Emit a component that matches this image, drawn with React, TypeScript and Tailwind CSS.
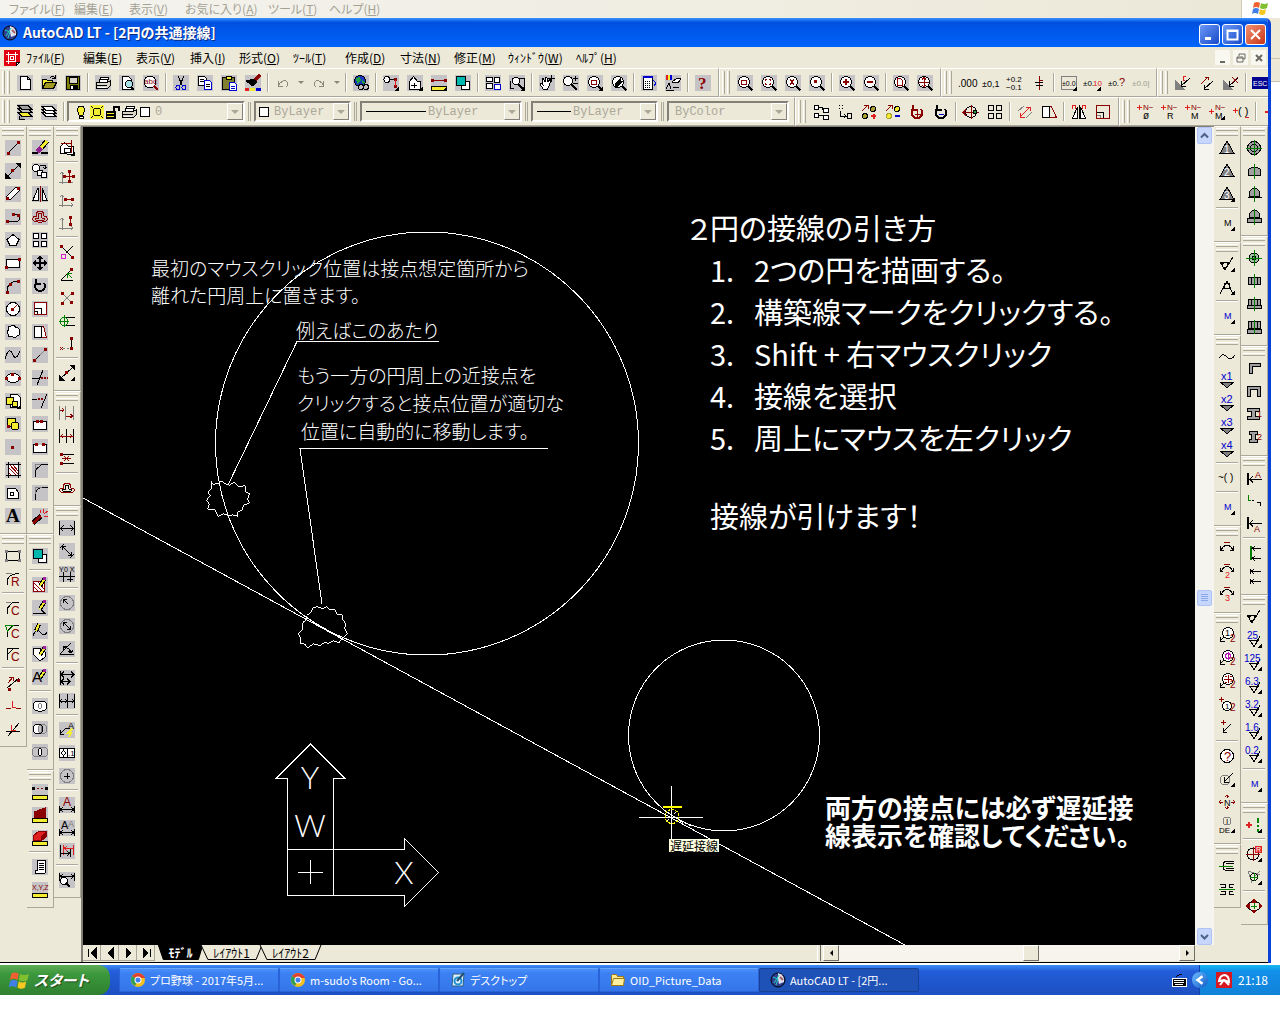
import type { ReactNode } from "react";
import clsx from "clsx";

const K = "#000000";
const R = "#8b0000";
const E = "#e02020";
const G = "#008000";
const B = "#0000d0";
const Y = "#f4ec30";
const W = "#ffffff";
const S = "#808080";
const T = "#00b8b0";
const N = "none";

// [path, stroke, fill, stroke width]
type Layer = [string, string?, string?, number?];
// [text, x, y, colour, size]
type Label = [string, number, number, string?, number?];
type IconDef = { p?: Layer[]; t?: Label[]; bg?: boolean; fly?: boolean };

const c = (x: number, y: number, r: number) =>
  `M${x - r} ${y}a${r} ${r} 0 1 0 ${2 * r} 0a${r} ${r} 0 1 0 ${-2 * r} 0`;
const dot = (x: number, y: number) => `M${x - 1} ${y - 1}h3v3h-3z`;
const dots = (...pts: [number, number][]): Layer => [pts.map(([x, y]) => dot(x, y)).join(""), N, R];

const lens = (...extra: Layer[]): Layer[] => [
  [c(7, 7, 5.5), K, W],
  ["M11 11L15.5 15.5", K, N, 2],
  ...extra,
];
const ruler: Layer = ["M.5 11.5h15v4h-15z", K, Y];
const page = "M3.5 1.5h6l3 3v10h-9z";
const pencil: Layer[] = [
  ["M13 1L8 9", K, N, 4],
  ["M13 1L8 9", Y, N, 2],
  ["M13 0L12 3", "#a020a0", N, 3],
];
const dimH = "M.5 1v14M15.5 1v14M1 8.5h14M4.5 5.5L1.5 8.5l3 3M11.5 5.5l3 3-3 3";
const rough: Layer = ["M4 8.5h8L8 14.5zM8 14.5L14 4", K];
const balloon: Layer[] = [
  [c(9, 6, 5.5), K, W],
  ["M5 10L1 14M1.5 10v4.5H6", K],
];

const icons: Record<string, IconDef> = {
  new: { bg: true, p: [["M3.5 1.5h7l3 3v10h-10zM10.5 1.5v3h3", K, W]] },
  open: { bg: true, p: [["M1.5 13.5v-9h4l1 1h5v2", K, Y], ["M1.5 13.5l3-6h11l-3 6z", K, "#a09820"], ["M9 3q3-3 5 0M14 0v3h-3", K]] },
  save: { bg: true, p: [["M1.5 1.5h13v13h-13z", K, "#808000"], ["M4 2h8v6H4z", K, "#d8d4c8"], ["M5 10h7v4H5z", K, K], ["M6 11h2v3H6z", N, W]] },
  print: { bg: true, p: [["M4 7l2-5h8l-2 5", K, W], ["M1.5 7.5h11l3-2v5l-3 3h-11z", K, "#d8d4c8"], ["M2 10.5h10M6 4.5h6", K], ["M3 12.5h8", W]] },
  preview: { bg: true, p: [[page, K, W], [c(10, 9, 3.5), K, "#a8e0e8"], ["M12 12l3 3", K, N, 2]] },
  spell: { bg: true, p: [[c(7, 7, 6), K, W], ["M11 11l4 4", R, N, 2]], t: [["abc", 1, 9, R, 8]] },
  cut: { bg: true, p: [["M5 1l4 9M11 1L7 10", K], [c(5, 12.5, 2), B], [c(11, 12.5, 2), B]] },
  copy: { bg: true, p: [["M1.5 1.5h6l2 2v7h-8z", K, W], ["M7.5 5.5h5l2 2v7h-7z", B, W], ["M3 4.5h4M3 6.5h4M9 9.5h4M9 11.5h4", K]] },
  paste: { bg: true, p: [["M1.5 2.5h12v12h-12z", K, "#808030"], ["M5 1h5v3H5z", K, Y], ["M8.5 7.5h5l2 2v6h-7z", B, W], ["M10 11.5h4M10 13.5h4", B]] },
  matchprop: { bg: true, p: [["M15 0L9 6", R, N, 4], ["M1 6l8-2 3 3-4 4z", K, K], ["M0 13h4v3H0z", N, E], ["M5 13h5v3H5z", N, Y], ["M11 13h5v3h-5z", N, B]] },
  undo: { p: [["M3.5 6v5.5H8M3 11Q8 3 12 7Q14 10 11 12", "#8c8a7c"]] },
  redo: { p: [["M12.5 6v5.5H8M13 11Q8 3 4 7Q2 10 5 12", "#8c8a7c"]] },
  globe: { bg: true, p: [[c(7, 6, 5.5), K, "#1838c0"], ["M3 3l4-1 1 3-4 4zM9 5l3 2-2 3z", N, "#20a040"], [c(8, 12, 2.5), K, "#c0c0c0"], [c(13, 12, 2.5), K, "#c0c0c0"]] },
  osnap: { bg: true, fly: true, p: [[c(4, 4.5, 3), K, W], ["M7 4.5h4", K], dots([12, 4], [12, 11]), ["M12.5 5v6", E]] },
  plan: { bg: true, fly: true, p: [["M2.5 14.5v-8l4-5 4 5h3v8z", K, W], ["M7.5 8v5M4 10.5h6", K]] },
  distance: { bg: true, fly: true, p: [["M1 5.5h14", R], dots([1, 5], [14, 5]), ruler] },
  draworder: { bg: true, p: [["M6.5 6.5h8v8h-8z", K, W], ["M1.5 1.5h9v9h-9z", K, T]] },
  viewports: { bg: true, p: [["M1.5 2.5h6v4h-6zM1.5 8.5h6v5h-6zM9.5 2.5h5v5h-5z", K, W], ["M9.5 9.5h6v5h-6z", B, W]] },
  namedviews: { bg: true, fly: true, p: [["M1.5 6v7h3M3 3.5h12v9h-2", K], [c(7, 6, 3.5), K, W], ["M9 9l5 5", K, N, 2]] },
  pan: { bg: true, p: [["M4 14L1 9l1-1 2 2L3 4l1-1 2 4 1-5 1 1 1 4 2-3 1 1-2 6-2 4z", K, W], ["M12.5 0v7M9 3.5h7", K]] },
  zoomrt: { bg: true, p: [[c(5, 6, 4.5), K, W], ["M8 9l6 6", K, N, 2], ["M10 3.5h5M12.5 1v5M10 8.5h5", K]] },
  zoomwin: { bg: true, p: lens(["M4.5 9.5v-4h5v4z", R]) },
  zoomflyout: { bg: true, fly: true, p: lens(["M4.5 9.5v-4h5v4z", R]) },
  zoomprev: { bg: true, p: lens(["M4 9l6-6-1 4 3-1-7 7z", K, K]) },
  properties: { bg: true, p: [["M2.5 1.5h9v13h-9z", K, W], ["M2 2h10", B, N, 2], ["M4 6.5h1M6 6.5h1M8 6.5h1M4 8.5h1M6 8.5h1M8 8.5h1M4 10.5h1M6 10.5h1M8 10.5h1M4 12.5h1M6 12.5h1M8 12.5h1", K], ["M12 5l3 3-2 3", B]] },
  designcenter: { bg: true, p: [["M1 0h2v5H1z", N, E], ["M3 0h2v5H3z", N, Y], ["M5 0h2v5H5z", N, B], ["M7 7l5-4 4 1-3 4z", K, W], ["M1 14l3-6 2 6M8 12.5h6M1 15.5h8", K]] },
  help: { bg: true, t: [["?", 3, 14, R, 17]] },
  zoomdyn: { bg: true, p: lens(["M4.5 6V4.5H6M9.5 6V4.5H8M4.500 8v1.5H6M9.500 8v1.500H8", R]) },
  zoomscale: { bg: true, p: lens(["M5 4l4 6M9 4l-4 6", R]) },
  zoomcenter: { bg: true, p: lens([dot(6, 6), N, R]) },
  zoomin: { bg: true, p: lens(["M4 7h6M7 4v6", R, N, 2]) },
  zoomout: { bg: true, p: lens(["M4 7h6", R, N, 2]) },
  zoomall: { bg: true, p: lens(["M4.5 3.5h3l2 2v5h-5z", R]) },
  zoomext: { bg: true, p: lens(["M2 7.5h10M7.5 2v10M5 4.500l2-2 2 2M5 10l2 2 2-2", R]) },
  tol000: { t: [[".000", -1, 12, K, 10]] },
  tol01: { t: [["±0,1", -1, 12, K, 9]] },
  tol02: { t: [["+0.2", -1, 7, K, 8], ["−0.1", -1, 15, K, 8]] },
  tolfit: { p: [["M8.5 1v14M8 5.5h4", R], ["M4 7.5h8M5 10.5h7", K]] },
  tolbox: { fly: true, p: [["M.5 1.5h15v13h-15z", S]], t: [["±0.0", 1, 11, K, 7]] },
  tol010: { fly: true, t: [["±0.", -2, 11, K, 8], ["10", 8, 11, E, 8]] },
  tolask: { t: [["±0.", -1, 11, K, 8], ["?", 10, 11, R, 11]] },
  tol001: { t: [["±0.0|", -1, 11, "#a0a090", 8]] },
  chamA: { p: [["M0 15V5l10 10z", N, S], ["M15 3L6 11M6.5 6v5.500H11", K], ["M11 1.5H8v4h2", E]] },
  chamB: { p: [["M14 6L5 14M5.5 10v4.500H10", K], ["M2 9L9 2M6 2.500h3.500V5", R]] },
  chamC: { p: [["M0 15V5l10 10z", N, S], ["M15 3L6 11M6.5 6v5.500H11", K], ["M9 2l6 6M15 2L9 8", R]] },
  esc: { p: [["M-1 2h17v12H-1z", N, "#000090"]], t: [["ESC", 0, 11, W, 7]] },
  layerprev: { bg: true, p: [["M1 4.5h10l4 4H5z", K, "#c0c0c0"], ["M1 8.5h10l4 4H5z", K, Y], ["M1 1.5h10l4 4H5zM2 12v3h6", K, "#a0a0a0"]] },
  layers: { bg: true, p: [["M1 8.5h10l4 4H5z", K, W], ["M1 5.5h10l4 4H5z", K, W], ["M1 2.5h10l4 4H5z", K, W]] },
  bulb: { p: [["M8 2Q3 3 5 8l1 3h4l1-3Q13 3 8 2z", K, Y], ["M6 12h4v2H6z", K, W]] },
  sun: { p: [["M1 1h14v14H1z", N, "#f8f440"], [c(8, 8, 4), K, Y], ["M2 2l2 2M14 2l-2 2M2 14l2-2M14 14l-2-2", K]] },
  lock: { p: [["M1 7h9v7H1z", K, K], ["M9 7V3h5v4", K, N, 2], ["M2 9.5h7M2 12.5h7", Y]] },
  swatch: { p: [["M3.5 3.5h9v9h-9z", K, W]] },
  cpA: { p: [["M1.5 1.5h4v4h-4zM1.5 9.5h4v4h-4zM10.5 4.5h5v4h-5zM10.5 11.5h5v4h-5z", K, W], ["M6 3.500h3.500V6M6 11.500h4", K]] },
  cpB: { p: [["M1.5 1.500h1M4.500 1.500h1M1.500 4.500h1M4.500 4.500h1", K], ["M10.5 9.5h4v5h-4zM3.500 7v5.500h6M7 10l2 2-2 2", K]] },
  cpC: { p: [["M1 7L7 1M3 1.5h4.500V5", R], [c(12, 5, 2.5), K, "#a8a030"], [c(4, 12, 2.5), K, "#a8a030"], ["M10 12h5M12.500 9.500v5", E, N, 2]] },
  cpD: { p: [["M1 7L7 1M3 1.5h4.500V5", R], [c(12, 5, 2.5), K, Y], [c(4, 12, 2.5), "#a8a030", Y], ["M10 12h5", B, N, 2]] },
  rotR: { p: [["M4 5a5.5 5.5 0 1 0 8 0M4 1v5h5", R, N, 2], ["M8.5 7v6M6 10.5h6", R]] },
  rotK: { p: [["M4 5a5.5 5.5 0 1 0 8 0M4 1v5h5", K, N, 2], ["M6 10.5h5", B]] },
  center: { p: [[c(8, 8, 5.5), K], ["M0 8.5h16M8.5 1v14M3 5.500l-3 3 3 3", R], [c(12, 8, 2), K, "#20a040"]] },
  array: { bg: true, p: [["M1.5 1.5h5v5h-5zM9.5 1.5h5v5h-5zM1.5 9.5h5v5h-5zM9.5 9.5h5v5h-5z", K, W]] },
  array2: { p: [["M1.5 1.5h5v5h-5zM9.5 1.5h5v5h-5zM1.5 9.5h5v5h-5zM9.5 9.5h5v5h-5z", K]] },
  stretchR: { p: [["M1 7l6-5M15 8l-6 6", S], ["M3 13L13 3M9 3.5h4.500V7M3.500 9v4.500H8", E]] },
  taper: { p: [["M1.5 2.5h7v11h-7z", K, W], ["M8.5 2.5h2l5 11h-7", R]] },
  mirrorR: { p: [["M6.5 3v11h-5zM9.5 3v11h5z", K, W], ["M8 1v14", K], ["M1.5 5V1.500h3v3M11.500 5V1.500h3v3", E]] },
  scaleR: { p: [["M1.5 1.5h13v13h-13z", R], ["M2 8.5h6.500V14", K], ["M2 11.5h3.500V14", S]] },
  n0: { p: [["M0 3.5h5M2.5 1v5", E]], t: [["N−", 6, 6, R, 8], ["ø", 6, 15, K, 10]] },
  nR: { p: [["M0 3.5h5M2.5 1v5", E]], t: [["N−", 6, 6, R, 8], ["R", 6, 15, K, 9]] },
  nM: { p: [["M0 3.5h5M2.5 1v5", E]], t: [["N−", 6, 6, R, 8], ["M", 6, 15, K, 9]] },
  nMC: { fly: true, p: [["M0 7.5h5M2.5 5v5", E]], t: [["N−", 6, 6, R, 8], ["M", 6, 15, K, 9]] },
  nPar: { p: [["M0 6.5h5M2.5 4v5M12 13.500h4", E]], t: [["( )", 5, 11, K, 11]] },
  redbar: { p: [["M2 8h12", E, N, 2]] },

  line: { bg: true, p: [["M3 13L13 3", K], dots([3, 13], [13, 2])] },
  xline: { bg: true, p: [["M1 15L15 1", K], ["M0 10v6h6zM16 6V0h-6z", N, K], [dot(7, 7), N, R]] },
  mline: { bg: true, p: [["M1 11L11 1l4 3L5 14z", K, W], dots([2, 12], [13, 2])] },
  pline: { bg: true, p: [["M2 12.5h10Q16 11 14 6L8 5", K], dots([2, 12], [8, 5], [13, 6])] },
  polygon: { bg: true, p: [["M8 2.5l6 5-3 6H5l-3-6z", K, W]] },
  rect: { bg: true, p: [["M1.5 4.5h13v8h-13z", K, W], dots([1, 12], [14, 4])] },
  arc: { bg: true, p: [["M2 14Q2 3 14 3", K], dots([2, 14], [5, 6], [13, 3])] },
  circle: { bg: true, p: [[c(8, 8, 6.5), K, W], ["M8 8l4-4", R], [dot(7, 8), N, R]] },
  cloud: { bg: true, p: [["M4 6Q1 7 3 10Q3 14 7 12Q10 15 12 12Q16 11 14 8Q15 3 11 4Q9 0 6 2Q2 2 4 6z", K, W]] },
  spline: { bg: true, p: [["M0 12Q4-2 8 8Q11 14 15 4", K]] },
  ellipse: { bg: true, p: [["M1 8a7 4.5 0 1 0 14 0a7 4.5 0 1 0 -14 0", K, W], dots([1, 8], [7, 4], [14, 8])] },
  insert: { bg: true, fly: true, p: [["M5.5 1.5h7l3 3v10h-10z", K, W], ["M1.5 4.5h7v7h-7z", K, Y], [c(10, 11, 3), K, Y]] },
  block: { bg: true, p: [["M2.5 2.5h8v8h-8z", K, Y], [c(10, 10, 4), K, Y], dots([3, 10])] },
  point: { bg: true, p: [[dot(7, 8), N, R]] },
  hatch: { bg: true, p: [["M3.5 2.5h10v11h-10z", K, W], ["M4 6l7 7M4 2l9 10M8 3l5 6M3 10l4 4", R], ["M1 2.5h15M1 13.5h15M3.5 0v16M13.5 0v16", K]] },
  region: { bg: true, p: [["M2.5 3.5h8l3 4v6h-11z", K, W], [c(7, 9, 2), K]] },
  mtext: { bg: true, t: [["A", 1, 14, K, 19]] },
  erase: { bg: true, p: [["M0 13h6M9 13h7", K, N, 2], ["M15 1L9 8", K, N, 5], ["M15 1L9 8", Y, N, 3], ["M9 8l-4 4", "#902090", N, 5]] },
  copyobj: { bg: true, p: [[c(4, 5, 3.5), K, W], ["M8 2h5v4M11 4l2 2 2-2", K], [c(8, 10, 3), K, W], [c(12, 12, 3), K, W]] },
  mirror: { bg: true, p: [["M6 2v12H1zM10 2v12h5z", K, W], ["M8.5 0v16", R]] },
  offset: { bg: true, p: [["M1 11Q0 7 4 7Q4 2 8 2Q12 2 12 7Q16 7 15 11Q14 13 10 13H6Q2 13 1 11z", R], ["M4 11Q3 9 6 9Q6 4 8 4Q10 4 10 9Q13 9 12 11z", R]] },
  move: { bg: true, p: [["M8 1v14M1 8h14", K, N, 2], ["M8 0l3 4H5zM8 16l3-4H5zM0 8l4-3v6zM16 8l-4-3v6z", N, K]] },
  rotate: { bg: true, p: [["M4 5a5 5 0 1 0 8 0M4 1v5h5", K, N, 2]] },
  scale: { bg: true, p: [["M2.5 1.5h12v12h-12z", R, W], ["M3 7.500h6.500V13", K], ["M2 10.5h3.500V13", K]] },
  stretch: { bg: true, p: [["M2.5 2.5h7v11h-7z", K, W], ["M9.5 2.5h2l3 11h-5", R, W]] },
  lengthen: { bg: true, p: [["M2 14l6-6", K], ["M8 8l6-6", S], dots([2, 13], [13, 2])] },
  trim: { bg: true, p: [["M11 0L5 15M0 8.5h7", K], ["M9 8h2M12 8h2M15 8h1", R, N, 2]] },
  extend: { bg: true, p: [["M15 1L9 15M0 6h5", K], ["M6 6h2M9 6h2", R, N, 2]] },
  break1: { bg: true, p: [["M1.5 5.5h13v8h-13z", K, W], dots([5, 5], [9, 5])] },
  break2: { bg: true, p: [["M4 5.5H1.5v8h13v-8H12", K, W], dots([4, 5], [11, 5])] },
  chamfer: { bg: true, p: [["M3.5 15V8l6-5.5H16", K], ["M3.5 8V2.5H9", S]] },
  fillet: { bg: true, p: [["M3.5 15V9Q4 3 11 2.5h5", K], ["M3.5 9V2.5H10", S]] },
  explode: { bg: true, p: [["M1 15l8-7", K, N, 5], ["M1 15l8-7", R, N, 3], ["M11 5l1-4M12 6l4-3M12 8l4 1M9 5L8 2", E]] },
  refedit: { p: [["M1.5 3.5h13v9h-13z", K], [dot(1, 3) + dot(14, 3) + dot(1, 12) + dot(14, 12), N, S]] },
  filR: { p: [["M2.5 14V9Q3 3 14 2.5", K], ["M1 2.5h6", S]], t: [["R", 6, 15, R, 12]] },
  filC: { p: [["M2.5 14V8l5-5.5H14", K], ["M1 2.5h5", S]], t: [["C", 6, 15, R, 12]] },
  filCg: { p: [["M2.5 14V8l5-5.5H14", K], ["M.5 2.5h8l-6 6z", G]], t: [["C", 6, 15, R, 12]] },
  filCk: { p: [["M2.5 14V2.5H14", K], ["M3 8l5-5", K]], t: [["C", 6, 15, R, 12]] },
  redA: { p: [["M2 13L14 3", K], ["M3 8l5-6M4 2.5h4.5V6", R], dots([13, 5], [4, 14])] },
  redB: { p: [["M1 10.5h5M11 10.5h5", R], ["M7.5 3v6.500H11", E]] },
  redC: { p: [["M1 10.5h14", K], ["M3 15L14 2", K], ["M6.5 4v5.500H11", E]] },
  hatchedit: { bg: true, p: [["M1.5 4.5h11v10h-11z", R, W], ["M2 10l4 4M2 6l8 8M6 5l6 7", R], ...pencil] },
  pedit: { bg: true, p: [["M1 13.5h12l-4-4", K], ...pencil] },
  splinedit: { bg: true, p: [["M1 13Q4 4 8 9Q12 15 15 9", K], ["M7 1L4 8", K, N, 4], ["M7 1L4 8", Y, N, 2]] },
  attedit: { bg: true, p: [["M1 3l6-1 6 4v5l-5 4-6-6z", K, W], ...pencil] },
  textedit: { bg: true, p: pencil, t: [["A", 0, 13, K, 15]] },
  union: { bg: true, p: [["M6 3a5 5 0 1 0 0 10h4a5 5 0 1 0 0-10z", K, W], ["M8 5Q5 8 8 11Q11 8 8 5z", S]] },
  subtract: { bg: true, p: [[c(10, 8, 5), S], [c(6, 8, 5), K, W], ["M8 4Q4 8 8 12Q12 8 8 4z", S, "#c6c3c6"]] },
  intersect: { bg: true, p: [[c(5, 8, 5), S], [c(11, 8, 5), S], ["M8 4Q4 8 8 12Q12 8 8 4z", K, W]] },
  inqdist: { bg: true, p: [["M1 4.5h2M5 4.500h2M9 4.500h2M13 4.500h2", R], [dot(1, 4) + dot(14, 4), N, K], ruler] },
  inqarea: { bg: true, p: [["M2 10V5l11-4v9z", R, R], ruler] },
  inqmass: { bg: true, p: [["M1 10V6l6-5h7v6l-5 4z", R, E], ["M9 11V6l5-4v5z", N, R], ruler] },
  list: { bg: true, p: [["M5.5 1.5h8v11q0 2-2 2h-8v-3h2z", K, W], ["M7 4.5h5M7 6.5h5M7 8.5h5M7 10.5h5", K]] },
  locate: { bg: true, p: [ruler], t: [["X,Y,Z", 0, 8, R, 7]] },

  house: { fly: true, p: [["M1.5 13.5v-7l4-4 4 4h5v8z", K, W], ["M5 8.5h6v4H5z", K], ["M2 3.5h10.500V13", R], ["M12 0v5", R]] },
  coordA: { p: [["M3.5 15V3M1 5l2-2 2 2M0 13.5h14", S], ["M5 7.5h10M10.5 2v10", R], dots([5, 7], [14, 7], [10, 2], [10, 12])] },
  coordB: { p: [["M3.5 15V3M1 5l2-2 2 2M0 13.5h14M12 11l2 2-2 2", S], ["M5 7.5h9", R], dots([6, 7], [13, 7])] },
  coordC: { p: [["M3.5 15V3M1 5l2-2 2 2M0 13.5h14M12 11l2 2-2 2", S], ["M11.5 2v8", R], dots([11, 2], [11, 9])] },
  snapA: { p: [["M2 2l12 12M14 2L7 9", K], dots([2, 2], [13, 13]), ["M2.5 10.5h4v4h-4z", "#d020d0"]] },
  snapB: { p: [["M2 13L13 2M2 13.5h12", K], dots([12, 2]), ["M8.5 11V6.500H13M8 6l5 5", G]] },
  snapC: { p: [["M3 13L13 3M3 3l10 10", S], dots([3, 3], [13, 3], [3, 13], [12, 12])] },
  snapD: { p: [[c(5, 8.5, 4), G], ["M0 8.5h10M5.5 2v12", G], ["M7 4.5h9M7 12.5h9", K]] },
  snapE: { p: [["M12.5 3v9", K], ["M4 12.5h2M8 12.500h2", S], dots([12, 2], [12, 12]), ["M1 11l3 3M4 11l-3 3", R]] },
  snapF: { fly: true, p: [["M1 14L14 2", K], ["M0 10v6h6zM16 6V0h-6z", N, K], [dot(7, 7), N, R]] },
  spA: { p: [["M.5 1v14M6.5 1v14M14.5 1v14", S], ["M1 5.5h4M7 11.500h7M3 3l2 2-2 2M11 9l3 2-3 2", R]] },
  spB: { p: [["M.5 1v14M7.5 1v14M14.5 1v14", K], ["M1 8.5h14M4 6L2 8l2 2M11 6l2 2-2 2", R]] },
  spC: { p: [["M1 3.5h14M1 12.5h14", K], ["M5 5l5 5M10 5l-5 5M3 7.5h9", R], dots([2, 3], [2, 12])] },
  offR: { p: [["M1 11Q0 8 4 8Q4 3 8 3Q12 3 12 8Q16 8 15 11Q14 13 8 13Q2 13 1 11z", R], ["M4 11Q3 9 6 9Q6 5 8 5Q10 5 10 9Q13 9 12 11z", K]] },
  dimlin: { bg: true, p: [[dimH, K]] },
  dimali: { bg: true, p: [["M1 5l4-4M11 15l4-4M3 3l10 10M3.5 7V3.5H7M12.5 9v3.500H9", K]] },
  dimord: { bg: true, p: [["M4.5 6v10M11.5 6v10M0 10.5h16M8 13.5h6", K]], t: [["Y", 0, 6, K, 7], ["0 X", 5, 6, K, 7]] },
  dimrad: { bg: true, p: [[c(8, 8, 6.5), S], ["M9 9L4 4M4.5 8V4.5H8", K]] },
  dimdia: { bg: true, p: [[c(8, 8, 6.5), S], ["M4 4l8 8M4.5 8V4.5H8M11.5 8v3.500H8", K]] },
  dimang: { bg: true, p: [["M1 13.5h14M1 13L12 2M5 6q6 1 7 6M4.5 9V5.500H8M9 10l3 2 2-3", K]] },
  dimbase: { bg: true, p: [["M1.5 1v14M2 4.500h13M2 11.500h8M12 1.500l3 3-3 3M8 8.500l3 3-3 3M5 1.500l-3 3 3 3M5 8.500l-3 3 3 3", K]] },
  dimcont: { bg: true, p: [["M.5 1v14M8.5 1v14M15.5 1v14M1 8.5h14M3 6L1 8l2 2M6 6l2 2-2 2M13 6l2 2-2 2", K]] },
  leader: { bg: true, p: [["M1 12l6-6h4M1.5 8v4.500H5", K], ["M13 7l-4 4h3l-2 4", Y, N, 2]], t: [["A", 9, 7, K, 9]] },
  toler: { bg: true, p: [["M.5 3.5h15v9h-15zM8.5 4v8", K, W], ["M4.5 5l2 3-2 3-2-3z", K]], t: [[".1", 9, 11, K, 8]] },
  centmark: { bg: true, p: [[c(8, 8, 6.5), S], ["M5 8.5h6M8.5 5v6", K]] },
  dimeditR: { bg: true, p: [["M.5 9v7M15.5 9v7M1 12.5h14M4 10l-3 2.5 3 2.5M12 10l3 2.5-3 2.5", K]], t: [["A", 4, 9, R, 12]] },
  dimeditK: { bg: true, p: [["M.5 9v7M15.5 9v7M1 12.5h14M4 10l-3 2.5 3 2.5M12 10l3 2.5-3 2.5", K]], t: [["A", 2, 9, K, 11], ["A", 9, 7, S, 9]] },
  dimupd: { bg: true, p: [["M1.5 2v12M11.500 5v9", K], ["M4.5 2v10M14.5 2v10M5 5.5h9M8 3L5 5.5l3 2", E], ["M2 10.5h9M8 8l3 2.500-3 2", K]] },
  dimstyle: { bg: true, p: [["M.5 1v8M15.5 1v8M1 4.5h14M12 2l3 2.500-3 2M4 2L1 4.500l3 2", K], [c(5, 9, 3.5), K, W], ["M7 11l4 4", K, N, 2]] },

  tri1: { p: [["M8 1L15 13.5H1z", K, S]], t: [["1", 5, 13, W, 10]] },
  tri2: { p: [["M8 1L15 13.5H1z", K, S]], t: [["2", 5, 13, W, 10]] },
  tri3: { fly: true, p: [["M8 1L15 13.5H1z", K, S]], t: [["3", 5, 13, W, 10]] },
  mk: { fly: true, t: [["M", 5, 11, K, 9]] },
  mb: { fly: true, t: [["M", 5, 11, B, 9]] },
  rghA: { fly: true, p: [["M1 6l5 8L14 1M2 6.5h8", K], [c(6, 9, 2.5), K]] },
  rghB: { fly: true, p: [["M1 15L8 2l6 13", K], [c(8, 7, 3), K]] },
  wave: { p: [["M0 9Q4 3 8 8Q12 12 16 6", K]] },
  x1: { p: [["M2 10.5h12L8 16z", K, S]], t: [["x1", 2, 8, B, 11]] },
  x2: { p: [["M2 10.5h12L8 16z", K, S]], t: [["x2", 2, 8, B, 11]] },
  x3: { p: [["M2 10.5h12L8 16z", K, S]], t: [["x3", 2, 8, B, 11]] },
  x4: { p: [["M2 10.5h12L8 16z", K, S]], t: [["x4", 2, 8, B, 11]] },
  wpar: { t: [["~( )", -1, 11, K, 10]] },
  arcdim: { p: [["M2 10Q8 0 14 10M1.5 6v4.500H5M14.500 6v4.500H11", K], ["M5 3Q8 1 11 3", R]] },
  arcdim2: { p: [["M2 8Q8-1 14 8M1.5 5v3.500H4M14.500 5v3.500H12", K], ["M5 2Q8 0 11 2", R]], t: [["2", 6, 15, E, 9]] },
  arcdim3: { p: [["M2 8Q8-1 14 8M1.5 5v3.500H4M14.500 5v3.500H12", K], ["M5 2Q8 0 11 2", R]], t: [["3", 6, 15, E, 9]] },
  balA: { p: balloon, t: [["1", 6, 9, K, 9], ["2", 11, 15, R, 10]] },
  balB: { p: [...balloon, ["M9.5 2v8", "#b020b0"], [c(9, 6, 2.5), "#b020b0"]], t: [["2", 11, 15, R, 10]] },
  balC: { p: [...balloon, ["M5 6.500h8M9.500 2v8M6 3.500h2M11 3.500h2M6 9.500h2", R]], t: [["2", 11, 15, R, 10]] },
  balD: { p: [[c(8, 10, 4.5), K, W], ["M0 3.5h5M2.5 1v5", R]], t: [["1", 6, 13, K, 8], ["2", 11, 15, R, 10]] },
  balE: { p: [["M2 3.5h5M4.5 1v5", R], ["M12 5l-8 8M4.500 9v4.500H8", K]] },
  ask: { p: [[c(8, 8, 6.5), K, W]], t: [["?", 5, 13, R, 13]] },
  circarrow: { fly: true, p: [[c(6, 9, 5), S], ["M14 2L5 11M5.500 6v5.500H10", K]] },
  moveN: { p: [["M8.5 1v3M8.5 12v3M0 8.5h4M12 8.5h4M6 3l2-2 2 2M6 13l2 2 2-2M2 6L0 8l2 2M14 6l2 2-2 2", R]], t: [["N", 5, 12, K, 9]] },
  de: { fly: true, p: [[c(8, 4, 4), S]], t: [["I", 7, 7, K, 8], ["DE", 0, 16, K, 8]] },
  boltA: { p: [["M15 3.5H7Q4 4 4 8Q4 12 7 12.5h8M7 5.500h8M7 10.500h8", K], ["M0 8.5h14", G]] },
  boltB: { p: [["M1 3.500h5v3H2M15 3.500h-5v3h4M1 13.500h5v-3H2M15 13.500h-5v-3h4", K], ["M0 8.5h16", G]] },

  screwTop: { p: [[c(8, 8, 6.5), K, "#a0a0a0"], [c(8, 8, 3.5), K], ["M0 8.5h16M8.5 0v16", G]] },
  nutA: { p: [["M2.5 12.5v-6l3-2h6l3 2v6z", K, "#a0a0a0"], ["M8.5 1v15", G]] },
  nutB: { p: [["M3.5 10.5v-5l3-3h4l3 3v5zM1.5 11.5h14", K, "#a0a0a0"], ["M8.5 0v16", G]] },
  nutC: { p: [["M3.5 8.5v-4l3-3h4l3 3v4zM1.5 9.5h14v4h-14z", K, "#a0a0a0"], ["M8.5 0v16", G]] },
  hexTop: { p: [[c(8, 8, 5), K, "#a0c0a0"], [c(8, 8, 2), K], ["M0 8.5h16M8.5 0v16", G]] },
  hexA: { p: [["M2.5 4.5h12v7h-12zM5.5 5v6M11.5 5v6", K, "#a0a0a0"], ["M8.5 1v14", G]] },
  hexB: { p: [["M2.5 3.5h12v6h-12zM5.5 3v6M11.5 3v6M1.5 12.500h14v-3h-14z", K, "#a0a0a0"], ["M8.5 1v14", G]] },
  hexC: { p: [["M2.5 2.5h12v7h-12zM5.5 3v6M11.5 3v6M1.5 10.5h14v4h-14z", K, "#a0a0a0"], ["M8.5 1v14", G]] },
  angle: { p: [["M3.5 13.5v-10h11v3h-8v7z", K, "#a0a0a0"]] },
  channel: { p: [["M1.5 13.5v-10h13v10h-3v-7h-7v7z", K, "#a0a0a0"]] },
  beam1: { p: [["M1.5 2.5h12v3h-4v5h4v3h-12v-3h4v-5h-4z", K, "#a0a0a0"]], t: [["1", 11, 11, R, 9]] },
  beam2: { p: [["M3.5 2.5h8v3h-2v5h2v3h-8v-3h2v-5h-2z", K, "#a0a0a0"]], t: [["2", 11, 11, R, 9]] },
  alA: { p: [["M2 3v12", K, N, 2], ["M3 9.5h13M7 6L4 9.500l3 3", K]], t: [["A", 9, 8, R, 9]] },
  alB: { p: [["M2.5 2v5M2 7.500h3", G], ["M6 7.500h2M14.5 9v4M11 9.500h3", K]] },
  alC: { p: [["M2 1v12", K, N, 2], ["M3 7.5h13M7 4L4 7.500l3 3", K]], t: [["A", 8, 16, R, 9]] },
  fork: { p: [["M5 1v14", G, N, 2], ["M6 3.5h9M6 13.5h9M9 1L6 3.500l3 2M9 11l-3 2.500 3 2", K]] },
  forkb: { p: [["M5 3.5h10M5 13.5h10M8 1L5 3.500l3 2M8 11l-3 2.500 3 2M4.5 1v5M4.5 11v5", K]] },
  r0: { p: [["M1 6l5 8L14 1M2 6.5h8", K], [c(6, 9, 2.5), K]] },
  r25: { fly: true, p: [rough], t: [["25", 1, 7, B, 10]] },
  r125: { fly: true, p: [rough], t: [["125", -2, 7, B, 10]] },
  r63: { fly: true, p: [rough], t: [["6.3", -1, 7, B, 10]] },
  r32: { fly: true, p: [rough], t: [["3.2", -1, 7, B, 10]] },
  r16: { fly: true, p: [rough], t: [["1.6", -1, 7, B, 10]] },
  r02: { fly: true, p: [rough], t: [["0.2", -1, 7, B, 10]] },
  plusbar: { fly: true, p: [["M0 8h6M3 5v6", E, N, 2], ["M12 1v5M12 8v2M12 12v3", G, N, 2]] },
  cenR: { fly: true, p: [[c(7, 8, 6), K], ["M0 8.5h14M7.5 1v14", R], ["M9 0h7v7H9z", N, E]], t: [["R", 10, 6, W, 7]] },
  cenG: { fly: true, p: [["M2 2l4 12M2 2l12 4M14 2L8 8", S], [c(8, 8, 3.5), K], ["M4 8.5h8M8.500 4v8", G]] },
  ellR: { p: [["M1 8a7 4.5 0 1 0 14 0a7 4.5 0 1 0 -14 0", K], ["M5 8.500h6M8.500 5v6", G], ["M8 1l2 3H6zM8 15l2-3H6zM0 8l3-2v4zM16 8l-3-2v4z", R, R]] },

  acadapp: { p: [[c(8, 8, 7), K, "#304090"], ["M8 1Q15 3 14 10L9 12 8 7z", N, "#e0e0f0"], ["M3 5l5 2-2 6M4 11l5-8", "#20d0c0"], ["M10 5l3 3", "#a06060", N, 2]] },
  acaddoc: { p: [["M0 0h16v12l-4 4H0z", N, "#e00010"], ["M2 4.5h12M2 11.5h10M4.500 2v12M11.500 2v10M6.500 6.500h3v3h-3z", W], ["M12 16v-4h4z", K, W]] },
  winlogo: { p: [["M1 3Q4 1 7 3L6 8Q3 6 0 8z", N, "#f06030"], ["M8 3Q11 5 15 3l-1 5Q10 10 7 8z", N, "#80c030"], ["M0 9q3-2 6 0l-1 5q-3-2-6 0z", N, "#4080e8"], ["M7 9q3 2 6 0l-1 5q-3 2-6 0z", N, "#f8c820"]] },
  chrome: { p: [[c(8, 8, 7), N, "#f4c020"], ["M8 8L2 4Q8-2 14 4l1 2H8z", N, "#e04030"], ["M8 8l-3 6Q-1 10 2 4z", N, "#30a050"], [c(8, 8, 3.5), N, W], [c(8, 8, 2.5), N, "#4080f0"]] },
  desktop: { p: [["M3 2h11l-1 12H2z", "#306080", "#e0f0ff"], [c(8, 9, 3.5), "#2090d0", N, 2], ["M7 9l7-8", "#205070", N, 2]] },
  folder: { p: [["M1.5 13.5v-10l1-1h4l1 2h6v9z", "#a07810", "#ffe890"], ["M1.5 13.5l2-7h11l-1 7z", "#a07810", "#fff0a0"]] },
  keyboard: { p: [["M1 6h14v8H1z", W, K], ["M3 8.5h10M3 10.5h10M4 12.5h8", W], ["M5 5q2-3 6-2", K]] },
  avira: { p: [["M0 0h16v16H0z", N, "#d81820"], ["M3 9Q4 3 9 3Q13 4 13 10L8 8zM8 8l-4 5M8 8l5 5", W, N, 2]] },
};

function Icon({ name, className, smooth }: { name: string; className?: string; smooth?: boolean }) {
  const icon = icons[name];
  return (
    <svg
      viewBox="0 0 16 16"
      shapeRendering={smooth ? "auto" : "crispEdges"}
      className={clsx("shrink-0 overflow-visible", className ?? "size-4")}
      aria-hidden="true"
    >
      {icon.bg && <rect width="16" height="16" fill="#c6c3c6" />}
      {icon.p?.map(([d, stroke = K, fill = "none", width = 1], i) => (
        <path key={i} d={d} stroke={stroke} fill={fill} strokeWidth={width} />
      ))}
      {icon.t?.map(([text, x, y, fill = K, size = 9], i) => (
        <text key={i} x={x} y={y} fill={fill} fontSize={size} className={name === "mtext" || name === "help" ? "font-['Liberation_Serif',serif] font-bold" : "font-['Liberation_Sans',sans-serif]"}>
          {text}
        </text>
      ))}
      {icon.fly && <path d="M16 11v5h-5z" fill="#000" />}
    </svg>
  );
}

// "|" is a separator, "v" a small drop-down arrow
function HBar({ items, children }: { items: string[]; children?: ReactNode }) {
  return (
    <div role="toolbar" className="flex h-[29px] shrink-0 items-stretch border-t border-r border-b border-t-white border-r-[#aca899] border-b-[#aca899] pr-[3px] not-first:border-l not-first:border-l-white">
      <div className="my-0.5 flex w-[13px] gap-0.5 pl-0.5">
        <span className="w-[3px] border-r border-l border-r-[#aca899] border-l-white" />
        <span className="w-[3px] border-r border-l border-r-[#aca899] border-l-white" />
      </div>
      {items.map((name, i) => {
        if (name === "|") return <HSep key={i} />;
        if (name === "v")
          return (
            <button key={i} aria-label="history" className="flex w-3 items-center justify-center">
              <span className="border-x-3 border-t-3 border-x-transparent border-t-[#8a8878]" />
            </button>
          );
        return (
          <button key={i} aria-label={name} className="flex w-6 shrink-0 items-center justify-center">
            <Icon name={name} />
          </button>
        );
      })}
      {children}
    </div>
  );
}

function HSep() {
  return (
    <div className="flex w-1.5 shrink-0 justify-center py-1">
      <span className="w-0.5 border-r border-l border-r-white border-l-[#aca899]" />
    </div>
  );
}

function VBar({ items, right }: { items: string[]; right?: boolean }) {
  return (
    <div
      role="toolbar"
      className={clsx(
        "flex flex-col items-center border-t border-r border-b border-t-white border-r-[#aca899] border-b-[#aca899]",
        right ? "pb-[7px]" : "pb-1.5",
      )}
    >
      <div className="flex h-[9px] w-full flex-col gap-0.5 px-0.5 pt-px">
        <span className="h-[3px] border-t border-b border-t-white border-b-[#aca899]" />
        <span className="h-[3px] border-t border-b border-t-white border-b-[#aca899]" />
      </div>
      {items.map((name, i) =>
        name === "|" ? (
          <div key={i} className="flex h-1.5 w-full items-center px-0.5">
            <span className="h-0.5 w-full border-t border-b border-t-[#aca899] border-b-white" />
          </div>
        ) : (
          <button key={i} aria-label={name} className="flex h-[23px] w-6 items-center justify-center">
            <Icon name={name} />
          </button>
        ),
      )}
    </div>
  );
}

function Combo({ label, value, className, children }: { label: string; value: string; className: string; children?: ReactNode }) {
  return (
    <div className={clsx("my-auto flex h-[21px] shrink-0 items-center border-2 border-t-[#848078] border-r-white border-b-white border-l-[#848078]", className)}>
      {children}
      <select aria-label={label} disabled className="h-full min-w-0 flex-1 appearance-none bg-transparent pl-0.5 font-['Liberation_Mono',monospace] text-[12px] leading-4 text-[#aca899] opacity-100">
        <option>{value}</option>
      </select>
      <span className="flex h-full w-4 items-center justify-center border border-t-white border-r-[#848078] border-b-[#848078] border-l-white">
        <span className="border-x-4 border-t-4 border-x-transparent border-t-[#aca899]" />
      </span>
    </div>
  );
}

function ComboGap() {
  return (
    <div className="flex w-[9px] shrink-0 justify-center py-1">
      <span className="w-[3px] border-r border-l border-[#aca899]" />
    </div>
  );
}

const standardBar = ["new", "open", "save", "|", "print", "preview", "spell", "|", "cut", "copy", "paste", "matchprop", "|", "undo", "v", "redo", "v", "|", "globe", "|", "osnap", "plan", "distance", "draworder", "|", "viewports", "namedviews", "|", "pan", "zoomrt", "zoomflyout", "zoomprev", "|", "properties", "designcenter", "|", "help"];
const zoomBar = ["zoomwin", "zoomdyn", "zoomscale", "zoomcenter", "|", "zoomin", "zoomout", "|", "zoomall", "zoomext"];
const toleranceBar = ["tol000", "tol01", "tol02", "tolfit", "|", "tolbox", "tol010", "tolask", "tol001"];
const chamferBar = ["chamA", "chamB", "chamC", "|", "esc"];
const copyBar = ["cpA", "cpB", "cpC", "cpD", "rotR", "rotK", "|", "center", "array2", "|", "stretchR", "taper", "|", "mirrorR", "scaleR"];
const numberBar = ["n0", "nR", "nM", "nMC", "nPar", "|", "redbar"];

const leftColumns = [
  [
    ["line", "xline", "mline", "pline", "polygon", "rect", "arc", "circle", "cloud", "spline", "ellipse", "insert", "block", "point", "hatch", "region", "mtext"],
    ["refedit", "filR", "|", "filC", "filCg", "filCk", "|", "redA", "redB", "redC"],
  ],
  [
    ["erase", "copyobj", "mirror", "offset", "array", "move", "rotate", "scale", "stretch", "lengthen", "trim", "extend", "break1", "break2", "chamfer", "fillet", "explode"],
    ["draworder", "|", "hatchedit", "pedit", "splinedit", "attedit", "textedit", "|", "union", "subtract", "intersect"],
    ["inqdist", "inqarea", "inqmass", "|", "list", "locate"],
  ],
  [
    ["house", "|", "coordA", "coordB", "coordC", "|", "snapA", "snapB", "snapC", "snapD", "snapE", "|", "snapF"],
    ["spA", "spB", "spC", "|", "offR"],
    ["dimlin", "dimali", "dimord", "|", "dimrad", "dimdia", "dimang", "|", "dimbase", "dimcont", "|", "leader", "toler", "centmark", "|", "dimeditR", "dimeditK", "dimupd", "|", "dimstyle"],
  ],
];

const rightColumns = [
  [
    ["tri1", "tri2", "tri3", "|", "mk"],
    ["rghA", "rghB", "|", "mb"],
    ["wave", "x1", "x2", "x3", "x4", "|", "wpar", "|", "mb"],
    ["arcdim", "arcdim2", "arcdim3"],
    ["balA", "balB", "balC", "balD", "balE", "|", "ask", "circarrow", "moveN", "de"],
    ["boltA", "boltB"],
  ],
  [
    ["screwTop", "nutA", "nutB", "nutC"],
    ["hexTop", "hexA", "hexB", "hexC"],
    ["angle", "channel", "beam1", "beam2"],
    ["alA", "alB", "alC", "|", "fork", "forkb"],
    ["r0", "r25", "r125", "r63", "r32", "r16", "r02", "|", "mb"],
    ["plusbar", "|", "cenR", "cenG", "|", "ellR"],
  ],
];

const browserMenu = [
  ["ファイル", "F", "w-[65px]"],
  ["編集", "E", "w-[55px]"],
  ["表示", "V", "w-[56px]"],
  ["お気に入り", "A", "w-[83px]"],
  ["ツール", "T", "w-[61px]"],
  ["ヘルプ", "H", "w-[60px]"],
];

const appMenu = [
  ["ﾌｧｲﾙ", "F", "w-[57px]"],
  ["編集", "E", "w-[53px]"],
  ["表示", "V", "w-[54px]"],
  ["挿入", "I", "w-[49px]"],
  ["形式", "O", "w-[54px]"],
  ["ﾂｰﾙ", "T", "w-[52px]"],
  ["作成", "D", "w-[55px]"],
  ["寸法", "N", "w-[54px]"],
  ["修正", "M", "w-[54px]"],
  ["ｳｨﾝﾄﾞｳ", "W", "w-[68px]"],
  ["ﾍﾙﾌﾟ", "H", "w-[48px]"],
];

const steps = ["2つの円を描画する。", "構築線マークをクリックする。", "Shift + 右マウスクリック", "接線を選択", "周上にマウスを左クリック"];

const tasks = [
  { icon: "chrome", title: "プロ野球 - 2017年5月..." },
  { icon: "chrome", title: "m-sudo's Room - Go..." },
  { icon: "desktop", title: "デスクトップ" },
  { icon: "folder", title: "OID_Picture_Data" },
  { icon: "acadapp", title: "AutoCAD LT - [2円...", active: true },
];

function MenuItem({ item }: { item: string[] }) {
  return (
    <button className={clsx("shrink-0 text-left whitespace-nowrap", item[2])}>
      {item[0]}(<u className="underline-offset-1">{item[1]}</u>)
    </button>
  );
}

function TitleButton({ label, red, children }: { label: string; red?: boolean; children: ReactNode }) {
  return (
    <button
      aria-label={label}
      className={clsx(
        "flex size-[21px] items-center justify-center rounded-[3px] border border-white",
        red ? "bg-linear-to-br from-[#f09070] to-[#c83010]" : "bg-linear-to-br from-[#6c98f8] to-[#1848c8]",
      )}
    >
      <svg viewBox="0 0 13 13" className="size-[13px]" stroke="#fff" fill="none" strokeWidth="2">
        {children}
      </svg>
    </button>
  );
}

function Drawing() {
  return (
    <div className="relative h-[818px] min-w-0 flex-1 overflow-hidden bg-black text-white">
      <svg viewBox="83 127 1112 818" className="absolute top-0 left-0 h-[818px] w-[1112px]" fill="none" stroke="#fff" shapeRendering="crispEdges">
        <circle cx="427" cy="443.5" r="211.5" />
        <circle cx="724" cy="735.5" r="95.5" />
        <path d="M83 498L905 945" />
        <path d="M439 341.5H297L228 485M548 448.5H300L322 604" />
        {/* revision clouds */}
        <g transform="translate(140 220) scale(.3333)" strokeWidth="3">
          <path d="M213 784l7 9 14-2 10-8 14 9 10 4 14-9 14 14 19-4 2 18 12 7-6 14 5 13-16 6-6 15-13 6v13l-15-4-14 2-14-6-15 8-10-19-22-3 5-14-8-13 11-12-6-11 10-14z" />
          <path d="M500 1187l12-9 8-15 13-3 15 7 12-7 10 10h15l7 14h15v11l10 18-3 12 8 15-12 12-13 16-17-6-15 8-12-2-13 9-20-5-18 12-7-11-15-3 2-15-7-13 12-12v-12l3-13 7-2z" />
        </g>
        <path d="M287.5 849V778.5H276L310.5 744l34.5 34.5H333.5V895.5h-46V849h116.5v-11L438.5 872.5 404 907v-11.5H333M298 872.5h25M310.5 860v24" />
        <path d="M639 817.5h64M671.5 786v53" />
        <path d="M663 807h19" stroke="#ff0" strokeWidth="2" />
        <circle cx="672" cy="816.5" r="7" stroke="#ff0" strokeDasharray="3 1" />
        <path d="M667 812l9 9M676 812l-9 9M680 821l14 6" strokeDasharray="3 2" />
        <g fill="#fff" stroke="none" textAnchor="middle" fontSize="31" className="font-['Lato',sans-serif] font-light">
          <text x="310" y="789">Y</text>
          <text x="310" y="837">W</text>
          <text x="404" y="884">X</text>
        </g>
      </svg>
      <p className="absolute top-[127px] left-[68px] text-[19px] leading-[27px] font-light whitespace-nowrap">
        最初のマウスクリック位置は接点想定箇所から
        <br />
        離れた円周上に置きます。
      </p>
      <p className="absolute top-[189px] left-[213px] text-[19px] leading-7 font-light whitespace-nowrap">例えばこのあたり</p>
      <p className="absolute top-[234px] left-[214px] text-[19px] leading-7 font-light whitespace-nowrap">
        もう一方の円周上の近接点を
        <br />
        クリックすると接点位置が適切な
        <br />
        <span className="pl-1">位置に自動的に移動します。</span>
      </p>
      <div className="absolute top-[79px] left-[605px] text-[29px] leading-[42px] whitespace-nowrap">
        <h1>２円の接線の引き方</h1>
        <ol className="pl-[22px]">
          {steps.map((step, i) => (
            <li key={step} className="flex">
              <span className="w-11">{i + 1}.</span>
              {step}
            </li>
          ))}
        </ol>
        <p className="mt-9 pl-[22px]">接線が引けます！</p>
      </div>
      <p className="absolute top-[666px] left-[742px] text-[26px] leading-7 font-bold whitespace-nowrap">
        両方の接点には必ず遅延接
        <br />
        線表示を確認してください。
      </p>
      <div role="tooltip" className="absolute top-[712px] left-[586px] bg-[#ffffe1] px-px text-[12px] leading-[13px] text-black">
        遅延接線
      </div>
    </div>
  );
}

function ScrollButton({ label, d }: { label: string; d: string }) {
  return (
    <button aria-label={label} className="flex h-[17px] w-[15px] items-center justify-center rounded-xs border border-[#b0c4f4] bg-[#c6d6fc]">
      <svg viewBox="0 0 9 9" className="size-[9px]" fill="none" stroke="#4d6185" strokeWidth="2">
        <path d={d} />
      </svg>
    </button>
  );
}

function LayoutTab({ title, active }: { title: string; active?: boolean }) {
  return (
    <button role="tab" aria-selected={!!active} className={clsx("relative h-4 text-[12px] leading-4", active ? "w-[43px] font-bold text-white" : "w-[59px]")}>
      <svg viewBox="0 0 60 16" preserveAspectRatio="none" className="absolute inset-0 h-4 w-full overflow-visible">
        <path d="M-1 0L6 14.5H55L61 0" fill={active ? "#000" : "#ece9d8"} stroke="#000" vectorEffect="non-scaling-stroke" />
      </svg>
      <span className="relative">{title}</span>
    </button>
  );
}

function TabRow() {
  return (
    <div className="flex h-[17px] bg-[#ece9d8]">
      {["M4.5 4v8M12 3v10L7 8z", "M11 3v10L6 8z", "M6 3v10l5-5z", "M5 3v10l5-5zM12.5 4v8"].map((d, i) => (
        <button key={d} aria-label={["first", "previous", "next", "last"][i]} className="flex h-4 w-[18px] items-center justify-center border-r border-b border-[#aca899]">
          <svg viewBox="0 0 16 16" className="size-4" shapeRendering="crispEdges">
            <path d={d} stroke="#000" />
          </svg>
        </button>
      ))}
      <div role="tablist" className="ml-1 flex">
        <LayoutTab title="ﾓﾃﾞﾙ" active />
        <LayoutTab title="ﾚｲｱｳﾄ1" />
        <LayoutTab title="ﾚｲｱｳﾄ2" />
      </div>
      <div className="ml-auto flex h-4 w-[397px]">
        <span className="w-1 border-r border-l border-r-[#716f64] border-l-white" />
        <button aria-label="scroll left" className="ml-0.5 flex w-4 items-center justify-center border border-t-white border-r-[#716f64] border-b-[#716f64] border-l-white">
          <span className="border-y-3 border-r-3 border-y-transparent border-r-black" />
        </button>
        <div className="flex flex-1 bg-[#f6f4ec] pl-[184px]">
          <span className="w-4 border border-t-white border-r-[#716f64] border-b-[#716f64] border-l-white bg-[#ece9d8]" />
        </div>
        <button aria-label="scroll right" className="flex w-4 items-center justify-center border border-t-white border-r-[#716f64] border-b-[#716f64] border-l-white">
          <span className="border-y-3 border-l-3 border-y-transparent border-l-black" />
        </button>
        <span className="w-[19px]" />
      </div>
    </div>
  );
}

function Taskbar() {
  return (
    <footer className="flex h-[30px] items-stretch bg-linear-to-b from-[#3f8cf3] via-[#245edb] via-20% to-[#1c4fc0] text-[11px] text-white">
      <button className="flex w-[110px] shrink-0 items-center gap-1 rounded-r-xl bg-linear-to-b from-[#5eac56] via-[#3c983c] via-30% to-[#2f8030] pl-2.5 text-[15px] font-bold italic [text-shadow:1px_1px_1px_#1a4a1a]">
        <Icon name="winlogo" className="size-5" smooth />
        スタート
      </button>
      <div className="ml-[9px] flex min-w-0 flex-1 items-center">
        {tasks.map((task) => (
          <button
            key={task.title}
            className={clsx(
              "flex h-6 w-40 shrink-0 items-center gap-1 rounded-xs border pl-2.5 whitespace-nowrap",
              task.active ? "border-[#173f96] bg-[#1e52b7]" : "border-[#2a62d8] border-t-[#6aa4fa] bg-linear-to-b from-[#4a90f8] via-[#3c81f3] via-20% to-[#3476ea]",
            )}
          >
            <Icon name={task.icon} smooth />
            {task.title}
          </button>
        ))}
      </div>
      <div className="flex items-center pr-3">
        <Icon name="keyboard" />
      </div>
      <div className="relative flex items-center gap-1.5 border-l border-[#1042af] bg-linear-to-b from-[#18b9f2] via-[#1290e9] via-20% to-[#1182d8] pr-3 pl-4 text-[12px]">
        <button aria-label="show hidden icons" className="absolute top-[7px] -left-2 flex size-4 items-center justify-center rounded-full bg-linear-to-br from-[#70c0ff] to-[#1058c8]">
          <svg viewBox="0 0 8 8" className="size-2.5" fill="none" stroke="#fff" strokeWidth="2">
            <path d="M6 1L2 4l4 3" />
          </svg>
        </button>
        <Icon name="avira" smooth />
        <time>21:18</time>
      </div>
    </footer>
  );
}

export default function App() {
  return (
    <div className="min-h-screen bg-white font-['Noto_Sans_CJK_JP',sans-serif] text-[12px] text-black [font-feature-settings:'palt']">
      <div className="overflow-hidden bg-[#ece9d8]">
        <nav className="flex h-[18px] items-stretch bg-linear-to-r from-[#f4f3ee] to-[#ece8d8] pl-[9px] text-[12px] leading-4 text-[#a5a295]">
          {browserMenu.map((item) => (
            <MenuItem key={item[0]} item={item} />
          ))}
          <div className="ml-auto flex w-[39px] justify-center border-l border-[#d0ccb8] bg-white">
            <Icon name="winlogo" smooth />
          </div>
        </nav>
        <div className="flex">
          <section className="min-w-0 flex-1 overflow-hidden rounded-tr-md border-r-[3px] border-[#0840d8] bg-[#ece9d8]">
            <header className="flex h-[29px] items-center gap-[5px] bg-linear-to-b from-[#3a93ff] via-[#0050e0] via-15% to-[#0064fc] px-0.5">
              <Icon name="acadapp" smooth />
              <h2 className="text-[14px] font-bold text-white [text-shadow:1px_1px_0_#0a2a80]">AutoCAD LT - [2円の共通接線]</h2>
              <div className="ml-auto flex gap-0.5 pt-1">
                <TitleButton label="minimize">
                  <path d="M2 10.5h6" strokeWidth="3" />
                </TitleButton>
                <TitleButton label="maximize">
                  <path d="M1.5 2.5h10v9h-10zM1 3h11" />
                </TitleButton>
                <TitleButton label="close" red>
                  <path d="M2 2l9 9M11 2l-9 9" />
                </TitleButton>
              </div>
            </header>
            <nav className="flex h-[21px] items-center pl-1 text-[12px] leading-4">
              <Icon name="acaddoc" className="mr-1.5 size-4" />
              {appMenu.map((item) => (
                <MenuItem key={item[0]} item={item} />
              ))}
              <div className="ml-auto flex gap-[3px] pr-0.5">
                {["M2 9h5", "M3 3V1h6v5H7M1 4h6v5H1zM1 5h6", "M2 2l6 6M8 2L2 8"].map((d, i) => (
                  <button key={d} aria-label={["minimize drawing", "restore drawing", "close drawing"][i]} className="flex size-[15px] items-center justify-center bg-[#f8f7f0]">
                    <svg viewBox="0 0 10 10" className="size-2.5" fill="none" stroke="#6a6860" strokeWidth={i === 1 ? 1 : 2}>
                      <path d={d} />
                    </svg>
                  </button>
                ))}
              </div>
            </nav>
            <div className="flex overflow-hidden">
              <HBar items={standardBar} />
              <HBar items={zoomBar} />
              <HBar items={toleranceBar} />
              <HBar items={chamferBar} />
            </div>
            <div className="flex overflow-hidden">
              <HBar items={["layerprev", "layers", "|"]}>
                <Combo label="layer" value="0" className="w-[178px] pl-1">
                  {["bulb", "sun", "lock", "print", "swatch"].map((name) => (
                    <Icon key={name} name={name === "print" ? "printlayer" : name} />
                  ))}
                </Combo>
                <ComboGap />
                <Combo label="color" value="ByLayer" className="w-[97px]">
                  <Icon name="swatch" />
                </Combo>
                <ComboGap />
                <Combo label="linetype" value="ByLayer" className="w-[162px] pl-1">
                  <span className="h-px w-[60px] bg-black" />
                </Combo>
                <ComboGap />
                <Combo label="lineweight" value="ByLayer" className="w-[127px] pl-1">
                  <span className="h-px w-[34px] bg-black" />
                </Combo>
                <ComboGap />
                <Combo label="plot style" value="ByColor" className="mr-0.5 w-[122px] pl-1" />
              </HBar>
              <HBar items={copyBar} />
              <HBar items={numberBar} />
            </div>
            <div className="flex border-b border-black">
              <div className="flex w-[81px] shrink-0 items-start">
                {leftColumns.map((bars, i) => (
                  <div key={i} className="w-[27px]">
                    {bars.map((items, j) => (
                      <VBar key={j} items={items} />
                    ))}
                  </div>
                ))}
              </div>
              <main className="flex min-w-0 flex-1 flex-col border-t border-l-2 border-[#848078]">
                <div className="flex">
                  <Drawing />
                  <div className="flex w-[19px] flex-col items-start bg-[#f5f4ee] pl-0.5">
                    <ScrollButton label="scroll up" d="M1 6.5L4.5 3L8 6.5" />
                    <div className="flex flex-1 flex-col justify-center pt-[123px]">
                      <span className="flex h-4 w-[15px] flex-col items-center justify-center gap-px rounded-xs border border-[#b0c4f4] bg-[#c6d6fc]">
                        {[0, 1, 2, 3].map((n) => (
                          <span key={n} className="h-px w-[7px] bg-[#8ca8e8]" />
                        ))}
                      </span>
                    </div>
                    <ScrollButton label="scroll down" d="M1 3L4.5 6.5L8 3" />
                  </div>
                </div>
                <TabRow />
              </main>
              <div className="flex shrink-0 items-start">
                {rightColumns.map((bars, i) => (
                  <div key={i} className="w-[27px]">
                    {bars.map((items, j) => (
                      <VBar key={j} items={items} right />
                    ))}
                  </div>
                ))}
              </div>
            </div>
          </section>
          <div className="flex w-[9px] shrink-0 flex-col">
            <span className="h-[41px] border-b border-[#c8c4b0]" />
            <span className="h-[23px] border-b border-[#c8c4b0]" />
            <span className="flex-1 bg-white" />
          </div>
        </div>
        <div className="h-0.5 bg-white" />
      </div>
      <Taskbar />
    </div>
  );
}

icons.printlayer = { p: icons.print.p };
